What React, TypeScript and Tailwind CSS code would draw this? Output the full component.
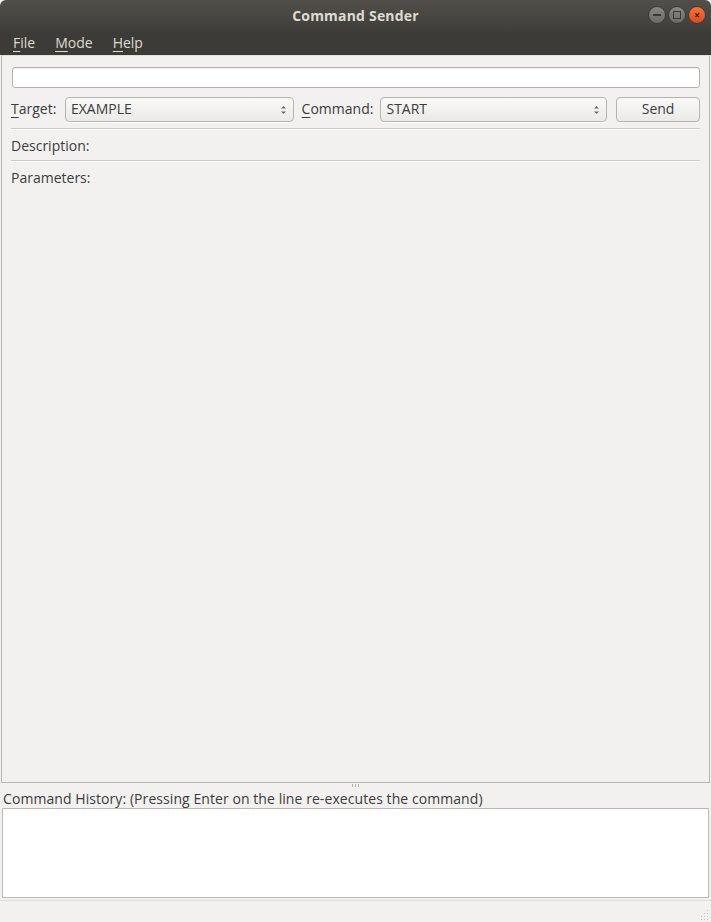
import React from "react";

const font = { fontFamily: '"Open Sans", "Noto Sans", sans-serif' };

function Spin() {
  return (
    <svg width="7" height="12" viewBox="0 0 7 12" className="shrink-0">
      <path d="M1 4.5 L3.5 2 L6 4.5 Z" fill="#6a6866" />
      <path d="M1 7.5 L3.5 10 L6 7.5 Z" fill="#6a6866" />
    </svg>
  );
}

function Combo({ value, w }: { value: string; w: string }) {
  return (
    <div
      className={`${w} h-[25px] flex items-center justify-between pl-[5px] pr-[6px] pb-[2px] rounded-[4px] border border-[#b7b4b0] bg-gradient-to-b from-[#f9f9f8] to-[#ebeae8] text-[14px] text-[#3c3c3c] shadow-[0_1px_0_rgba(255,255,255,0.8)]`}
    >
      <span>{value}</span>
      <span className="mt-[2px] flex">
        <Spin />
      </span>
    </div>
  );
}

function U({ c, rest }: { c: string; rest: string }) {
  return (
    <span>
      <span className="underline underline-offset-[3px] decoration-[1px]">{c}</span>
      {rest}
    </span>
  );
}

export default function App() {
  return (
    <div
      className="w-[711px] h-[922px] flex flex-col bg-[#f2f1f0] overflow-hidden text-[#3c3c3c]"
      style={font}
    >
      {/* Title bar */}
      <div className="relative h-[32px] shrink-0 flex items-center justify-center pb-[2px] bg-gradient-to-b from-[#524f4a] to-[#3f3e3a] rounded-t-[6px]">
        <span className="text-[14px] font-bold text-[#dfdbd2] tracking-[0.2px]">Command Sender</span>
        <div className="absolute right-[5px] top-[6px] flex gap-[2px]">
          <div className="w-[18px] h-[18px] rounded-full bg-gradient-to-b from-[#8a8884] to-[#6c6a66] border border-[#3b3a36] flex items-center justify-center">
            <div className="w-[8px] h-[1.5px] bg-[#3a3935]" />
          </div>
          <div className="w-[18px] h-[18px] rounded-full bg-gradient-to-b from-[#8a8884] to-[#6c6a66] border border-[#3b3a36] flex items-center justify-center">
            <div className="w-[8px] h-[8px] border-[1.5px] border-[#3a3935]" />
          </div>
          <div className="w-[18px] h-[18px] rounded-full bg-gradient-to-b from-[#f0733f] to-[#df4a15] border border-[#3b3a36] flex items-center justify-center text-[10px] leading-none text-[#3a1a0a] font-bold">
            ×
          </div>
        </div>
      </div>

      {/* Menu bar */}
      <div className="h-[23px] shrink-0 bg-[#3c3b37] flex items-start pl-[13px] gap-[20px] text-[14px] leading-[22px] text-[#dfdbd2]">
        <U c="F" rest="ile" />
        <U c="M" rest="ode" />
        <U c="H" rest="elp" />
      </div>

      {/* Main frame */}
      <div className="mx-[1px] h-[728px] shrink-0 border border-[#bab7b3] border-t-[#e2e0dd] flex flex-col pt-[11px] px-[9px]">
        <div className="ml-[1px] h-[21px] rounded-[3px] border border-[#b6b3af] bg-white shadow-[inset_0_1px_1px_rgba(0,0,0,0.06)]" />
        <div className="mt-[9px] flex items-center text-[14px] h-[25px]">
          <span className="w-[54px] pb-[2px]">
            <U c="T" rest="arget:" />
          </span>
          <Combo value="EXAMPLE" w="w-[229px]" />
          <span className="ml-[8px] w-[79px] pb-[2px]">
            <U c="C" rest="ommand:" />
          </span>
          <Combo value="START" w="w-[227px]" />
          <div className="ml-[9px] w-[84px] h-[25px] pb-[2px] rounded-[4px] border border-[#b7b4b0] bg-gradient-to-b from-[#f9f9f8] to-[#ebeae8] flex items-center justify-center">
            Send
          </div>
        </div>
        <div className="mt-[6px] h-[1px] bg-[#cdcac6] border-b border-white box-content" />
        <div className="mt-[8px] h-[17px] pb-[2px] flex items-center text-[14px]">Description:</div>
        <div className="mt-[5px] h-[1px] bg-[#cdcac6] border-b border-white box-content" />
        <div className="mt-[8px] h-[17px] pb-[3px] flex items-center text-[14px]">Parameters:</div>
      </div>

      {/* Splitter handle */}
      <div className="h-[7px] shrink-0 flex items-center justify-center">
        <div className="flex gap-[2px] mt-[-2px]">
          <div className="w-[1px] h-[3px] bg-[#b5b2ae]" />
          <div className="w-[1px] h-[3px] bg-[#b5b2ae]" />
          <div className="w-[1px] h-[3px] bg-[#b5b2ae]" />
        </div>
      </div>

      {/* History */}
      <div className="h-[18px] shrink-0 pl-[3px] pb-[2px] flex items-center text-[14px] tracking-[0.07px]">
        Command History: (Pressing Enter on the line re-executes the command)
      </div>
      <div className="mx-[2px] h-[90px] shrink-0 bg-white border border-[#bcb9b5]" />

      {/* Status bar */}
      <div className="flex-1 mt-[2px] border-t border-[#dedcd9] flex justify-end items-end pr-[2px] pb-[2px]">
        <svg width="10" height="10" viewBox="0 0 10 10">
          {[
            [8, 0],
            [8, 3],
            [5, 3],
            [8, 6],
            [5, 6],
            [2, 6],
            [8, 9],
            [5, 9],
            [2, 9],
          ].map(([x, y], i) => (
            <rect key={i} x={x} y={y} width="1" height="1" fill="#c4c1bd" />
          ))}
        </svg>
      </div>
    </div>
  );
}
